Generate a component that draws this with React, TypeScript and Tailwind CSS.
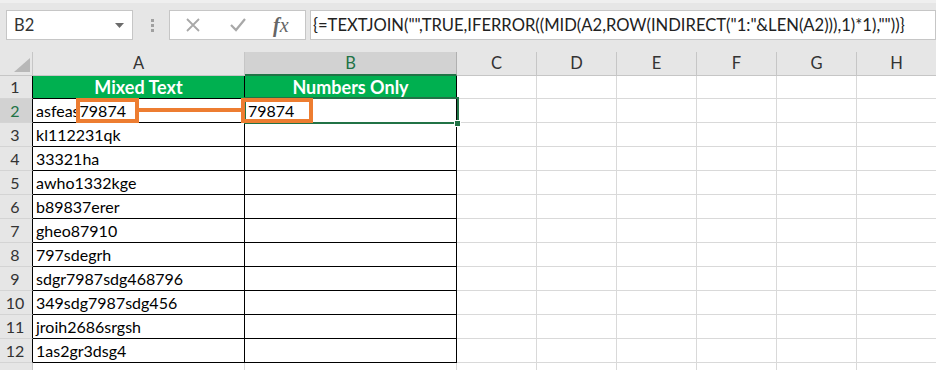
import React from "react";

const cols = ["A", "B", "C", "D", "E", "F", "G", "H"];
const widths = [212, 212, 80, 80, 80, 80, 80, 80];
const data = [
  "asfeas79874",
  "kl112231qk",
  "33321ha",
  "awho1332kge",
  "b89837erer",
  "gheo87910",
  "797sdegrh",
  "sdgr7987sdg468796",
  "349sdg7987sdg456",
  "jroih2686srgsh",
  "1as2gr3dsg4",
];

const font = { fontFamily: "Lato, 'Open Sans', sans-serif" };

function Row({ n }: { n: number }) {
  const selected = n === 2;
  const h = n === 1 ? "h-[23px]" : "h-[24px]";
  return (
    <div className={`flex ${h}`}>
      <div
        className={`w-[33px] shrink-0 flex items-center justify-center pr-[2px] border-b border-[#d4d4d4] ${
          selected ? "bg-[#d2d2d2] text-[#217346]" : "bg-[#e6e6e6] text-[#333]"
        } ${n === 13 ? "border-r border-r-[#c6c6c6]" : "border-r border-r-black"} text-[16px]`}
      >
        {n === 13 ? "" : n}
      </div>
      {cols.map((c, i) => {
        const inTable = (i === 0 || i === 1) && n <= 12;
        const border = inTable ? "border-r border-b border-black" : "border-r border-b border-[#d9d9d9]";
        let content: React.ReactNode = null;
        let cls = "text-[16px] pl-[3px]";
        if (n === 1 && i === 0) {
          content = "Mixed Text";
          cls = "bg-[#00b050] text-white font-bold justify-center text-[18px]";
        } else if (n === 1 && i === 1) {
          content = "Numbers Only";
          cls = "bg-[#00b050] text-white font-bold justify-center text-[18px]";
        } else if (i === 0 && n >= 2 && n <= 12) {
          content = data[n - 2];
        } else if (i === 1 && n === 2) {
          content = "79874";
        }
        return (
          <div
            key={c}
            style={{ width: widths[i] }}
            className={`shrink-0 flex items-center pt-[1px] text-black whitespace-nowrap ${border} ${cls}`}
          >
            {content}
          </div>
        );
      })}
    </div>
  );
}

export default function App() {
  return (
    <div className="relative w-[936px] h-[370px] overflow-hidden bg-white" style={font}>
      {/* toolbar */}
      <div className="h-[52px] bg-[#e6e6e6] border-t-[3px] border-[#efefef] flex items-start pt-[7px]">
        <div className="ml-[6px] w-[127px] h-[30px] bg-white border border-[#c6c6c6] flex items-center justify-between pl-[7px] pr-[8px]">
          <span className="text-[16.5px] text-[#333]">B2</span>
          <svg width="9" height="5" viewBox="0 0 9 5">
            <path d="M0 0 L9 0 L4.5 5 Z" fill="#6b6b6b" />
          </svg>
        </div>
        <div className="ml-[17px] w-[4px] h-[30px] flex flex-col items-center justify-center gap-[2px]">
          <div className="w-[3px] h-[3px] bg-[#a0a0a0]" />
          <div className="w-[3px] h-[3px] bg-[#a0a0a0]" />
          <div className="w-[3px] h-[3px] bg-[#a0a0a0]" />
        </div>
        <div className="ml-[15px] w-[137px] h-[30px] bg-white border border-[#c6c6c6] flex items-center">
          <svg className="ml-[15px]" width="16" height="16" viewBox="0 0 16 16">
            <path d="M2 2 L14 14 M14 2 L2 14" stroke="#a8a8a8" strokeWidth="1.8" />
          </svg>
          <svg className="ml-[28px]" width="18" height="16" viewBox="0 0 18 16">
            <path d="M2 8 L7 13 L16 2" stroke="#a8a8a8" strokeWidth="2.2" fill="none" />
          </svg>
          <span
            className="ml-[26px] text-[20px] italic text-[#666]"
            style={{ fontFamily: "'Liberation Serif', serif" }}
          >
            <span className="font-bold">f</span>x
          </span>
        </div>
        <div className="ml-[4px] flex-1 h-[30px] bg-white border border-[#c6c6c6] flex items-center pl-[2px] text-[16.6px] text-[#222] whitespace-nowrap overflow-hidden">
          {'{=TEXTJOIN("",TRUE,IFERROR((MID(A2,ROW(INDIRECT("1:"&LEN(A2))),1)*1),""))}'}
        </div>
      </div>

      {/* column headers */}
      <div className="flex h-[24px] bg-[#e6e6e6]">
        <div className="w-[33px] shrink-0 relative border-r border-b border-[#c6c6c6]">
          <svg className="absolute left-[14px] top-[6px]" width="16" height="14" viewBox="0 0 16 14">
            <path d="M16 0 L16 14 L0 14 Z" fill="#b8b8b8" />
          </svg>
        </div>
        {cols.map((c, i) => (
          <div
            key={c}
            style={{ width: widths[i] }}
            className={`shrink-0 flex items-center justify-center text-[16.5px] border-r ${
              c === "B"
                ? "bg-[#d2d2d2] text-[#217346] border-b-2 border-b-[#217346] border-r-[#b0b0b0]"
                : "text-[#333] border-b border-[#c6c6c6]"
            }`}
          >
            {c}
          </div>
        ))}
      </div>

      {/* rows */}
      {Array.from({ length: 13 }, (_, k) => (
        <Row key={k} n={k + 1} />
      ))}

      {/* selection */}
      <div className="absolute left-[244px] top-[97px] w-[215px] h-[27px] border-2 border-[#217346]" />
      <div className="absolute left-[454px] top-[120px] w-[7px] h-[7px] bg-[#217346] border border-white" />

      {/* orange annotation */}
      <div className="absolute left-[76px] top-[98px] w-[63px] h-[25px] border-[4px] border-[#ed7d31]" />
      <div className="absolute left-[241px] top-[98px] w-[72px] h-[25px] border-[4px] border-[#ed7d31]" />
      <div className="absolute left-[139px] top-[108px] w-[102px] h-[4px] bg-[#ed7d31]" />
    </div>
  );
}
